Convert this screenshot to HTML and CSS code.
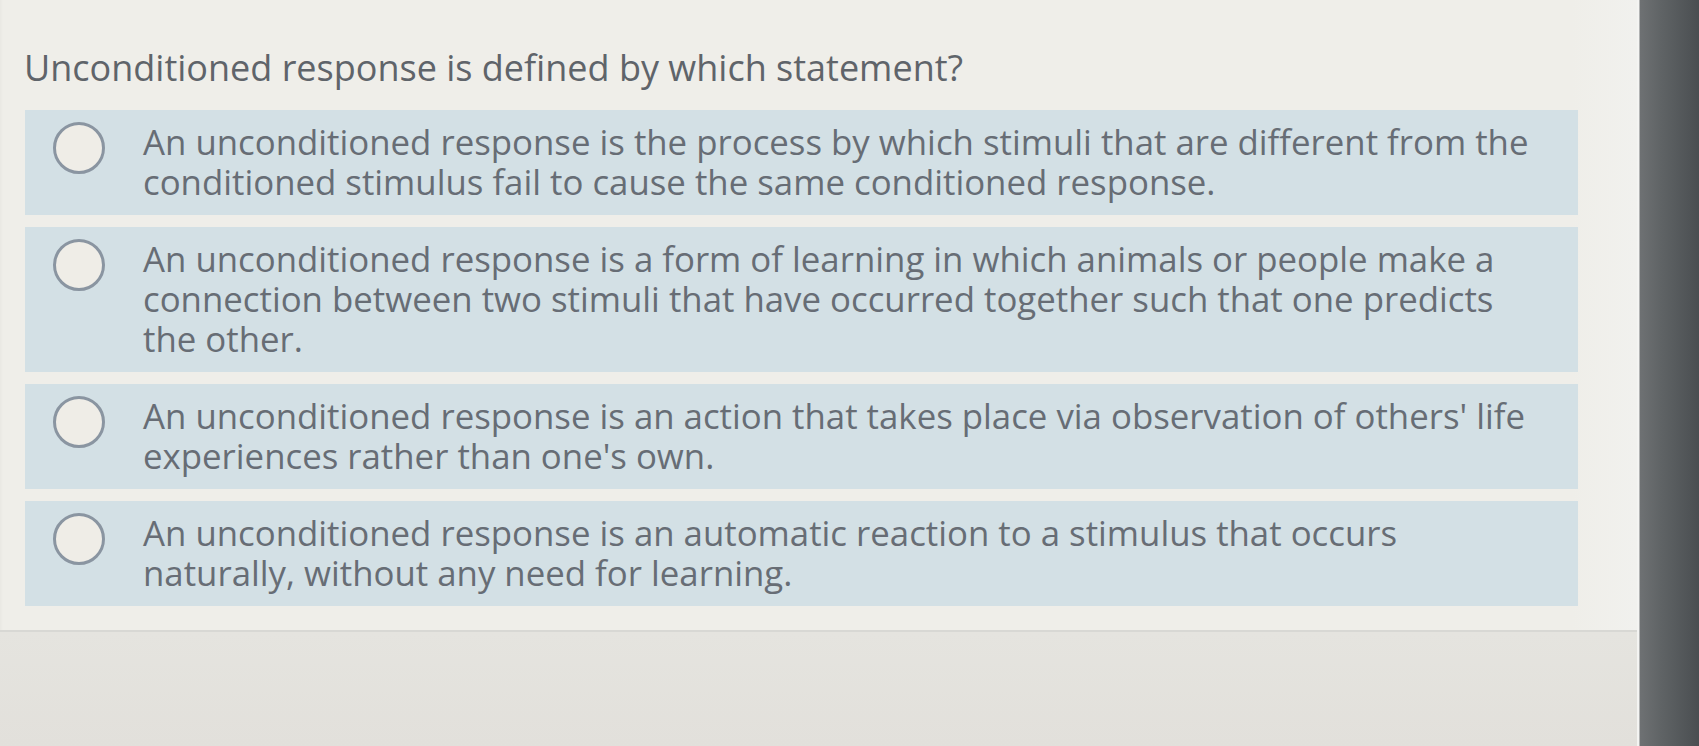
FILE: index.html
```html
<!DOCTYPE html>
<html lang="en">
<head>
  <meta charset="utf-8">
  <meta name="viewport" content="width=device-width,initial-scale=1.0">
  <title>Question</title>
  <link rel="stylesheet" href="styles.css">
</head>
<body>
  <div class="screen">
    <main class="page">
      <section class="question">
        <h1 class="question-title">Unconditioned response is defined by which statement?</h1>

        <ul class="choices">
          <li class="choice">
            <span class="radio"></span>
            <span class="choice-text">An unconditioned response is the process by which stimuli that are different from the conditioned stimulus fail to cause the same conditioned response.</span>
          </li>
          <li class="choice">
            <span class="radio"></span>
            <span class="choice-text">An unconditioned response is a form of learning in which animals or people make a connection between two stimuli that have occurred together such that one predicts the other.</span>
          </li>
          <li class="choice">
            <span class="radio"></span>
            <span class="choice-text">An unconditioned response is an action that takes place via observation of others' life experiences rather than one's own.</span>
          </li>
          <li class="choice">
            <span class="radio"></span>
            <span class="choice-text">An unconditioned response is an automatic reaction to a stimulus that occurs naturally, without any need for learning.</span>
          </li>
        </ul>
      </section>
      <div class="page-footer"></div>
    </main>
    <div class="bezel"></div>
  </div>
</body>
</html>
```
FILE: styles.css
```css
html, body {
  margin: 0;
  padding: 0;
  height: 100%;
  overflow: hidden;
}

body {
  font-family: 'Open Sans', 'Noto Sans', sans-serif;
  background: #ecebe6;
  color: #6a7078;
}

.screen {
  display: flex;
  height: 100%;
}

.page {
  flex: 1;
  display: flex;
  flex-direction: column;
  background: linear-gradient(90deg, #e9e8e3 0, #efeee9 3px, #efeee9 96%, #f1f1ee 100%);
}

/* Question card */
.question {
  flex: none;
  padding: 46px 0 24px 24px;
  border-bottom: 2px solid #d8d8d4;
}

.question-title {
  margin: 0 0 20px;
  font-size: 36px;
  font-weight: 400;
  line-height: 44px;
  color: #5f646a;
}

.choices {
  list-style: none;
  margin: 0 0 0 1px;
  padding: 0;
  width: 1553px;
  display: flex;
  flex-direction: column;
  gap: 12px;
}

.choice {
  display: flex;
  align-items: flex-start;
  gap: 38px;
  padding: 12px 20px 13px 28px;
  background: #d3e0e5;
}

.radio {
  flex: none;
  width: 46px;
  height: 46px;
  border: 3px solid #8a95a1;
  border-radius: 50%;
  background: #efede7;
}

.choice-text {
  max-width: 1405px;
  font-size: 34.8px;
  line-height: 40px;
  color: #676d75;
}

.page-footer {
  flex: 1;
  background: linear-gradient(#e5e4df, #e2e0db);
}

/* Dark monitor edge on the right */
.bezel {
  width: 62px;
  background: linear-gradient(90deg, #f4f4f2 0, #f4f4f2 2px, #6e7173 3px, #5f6365 40%, #4a4e51 100%);
}
```
